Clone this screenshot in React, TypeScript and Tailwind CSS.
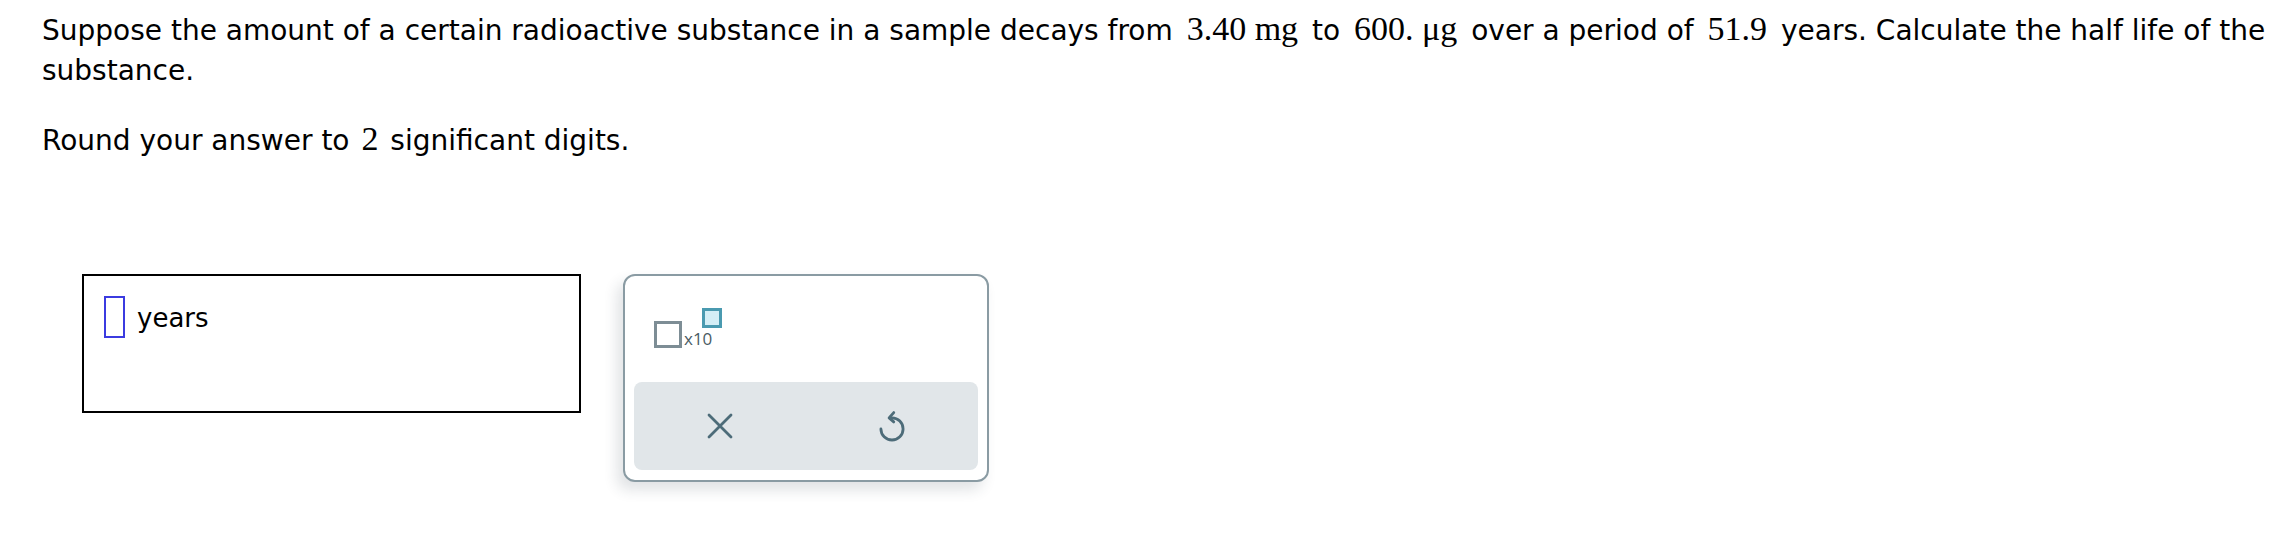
import React from "react";

function M({ children, wide = true }: { children: React.ReactNode; wide?: boolean }) {
  return (
    <span
      className={
        wide
          ? "mx-[5px] font-['Liberation_Serif','Times_New_Roman',serif] text-[34px] leading-none"
          : "mx-[3px] font-['Liberation_Serif','Times_New_Roman',serif] text-[34px] leading-none"
      }
    >
      {children}
    </span>
  );
}

export default function App() {
  return (
    <div className="w-[2296px] h-[552px] bg-white text-black font-['DejaVu_Sans','Verdana',sans-serif] overflow-hidden">
      <div className="pl-[42px] pr-[30px] pt-[11px]">
        <p className="text-[28px] leading-[40px]">
          Suppose the amount of a certain radioactive substance in a sample decays from <M>3.40 mg</M> to{" "}
          <M>600. μg</M> over a period of <M>51.9</M> years. Calculate the half life of the substance.
        </p>
        <p className="mt-[30px] text-[28px] leading-[40px]">
          Round your answer to <M wide={false}>2</M> significant digits.
        </p>

        <div className="mt-[113px] ml-[40px] flex items-start gap-[42px]">
          <div className="w-[499px] h-[139px] border-2 border-black pl-[20px] pt-[20px] flex items-start gap-[12px]">
            <div className="w-[21px] h-[42px] border-2 border-[#3b3be0]" />
            <span className="text-[26px] leading-[40px] mt-[2px]">years</span>
          </div>

          <div className="w-[366px] h-[208px] border-2 border-[#8a9ba3] rounded-[12px] bg-white shadow-[-6px_8px_14px_rgba(40,60,70,0.14)] flex flex-col">
            <div className="h-[106px] pl-[29px] pt-[32px]">
              <div className="relative w-[80px] h-[40px] pt-[12px] flex items-end">
                <div className="w-[28px] h-[27px] border-[3px] border-[#7d8d95]" />
                <span className="ml-[2px] text-[17px] leading-none text-[#4a5b63] font-['Open_Sans','DejaVu_Sans',sans-serif] mb-[1px]">x10</span>
                <div className="absolute left-[48px] top-0 w-[20px] h-[20px] border-[3px] border-[#4a9ab0] bg-[#d4eef6]" />
              </div>
            </div>
            <div className="mx-[9px] h-[88px] rounded-[8px] bg-[#e1e6e9] grid grid-cols-2 place-items-center">
              <svg width="26" height="26" viewBox="0 0 26 26" fill="none" stroke="#4d6c79" strokeWidth="2.8" strokeLinecap="round">
                <path d="M2 2 L24 24 M24 2 L2 24" />
              </svg>
              <svg width="28" height="34" viewBox="0 0 24 28" fill="none" stroke="#4d6c79" strokeWidth="2.4" strokeLinecap="round" strokeLinejoin="round">
                <path d="M12 7 A9.5 9.5 0 1 1 2.5 16.5" />
                <path d="M13.5 2.5 L9.5 7 L13.5 10.5" />
              </svg>
            </div>
          </div>
        </div>
      </div>
    </div>
  );
}
